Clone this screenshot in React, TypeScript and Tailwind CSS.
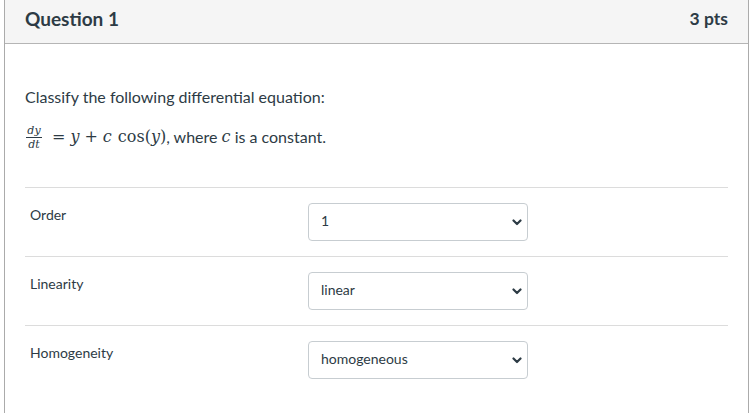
const rows = [
  { label: 'Order', value: '1' },
  { label: 'Linearity', value: 'linear' },
  { label: 'Homogeneity', value: 'homogeneous' },
];

function Chevron() {
  return (
    <svg width="10" height="7" viewBox="0 0 10 7" className="text-[#2d3b45]">
      <path d="M1.5 1.5 L5 5 L8.5 1.5" fill="none" stroke="currentColor" strokeWidth="2.2" strokeLinecap="round" strokeLinejoin="round" />
    </svg>
  );
}

function SelectBox({ value }: { value: string }) {
  return (
    <div className="w-[220px] h-[38px] border border-[#c7cdd1] rounded-[4px] bg-white flex items-center justify-between pl-[12px] pr-[5px]">
      <span className="text-[14px] leading-[18px] text-[#2d3b45] mb-[3px]">{value}</span>
      <Chevron />
    </div>
  );
}

function Equation() {
  return (
    <div className="mt-[13px] h-[30px] flex items-center text-[16px] text-[#2d3b45]">
      <span className="inline-flex flex-col items-center font-['DejaVu_Serif','Liberation_Serif',serif] italic text-[11px] leading-[11px] ml-[1px]">
        <span className="px-[1px]">dy</span>
        <span className="w-[16px] border-t border-[#2d3b45] mt-[1px]" />
        <span className="px-[1px] mt-[1px]">dt</span>
      </span>
      <span className="font-['DejaVu_Serif','Liberation_Serif',serif] text-[16px] ml-[10px]">
        =<span className="italic ml-[5px]">y</span>
        <span className="ml-[5px]">+</span>
        <span className="italic ml-[5px]">c</span>
        <span className="ml-[6px]">cos(</span>
        <span className="italic">y</span>)
      </span>
      <span className="whitespace-pre">, where </span>
      <span className="font-['DejaVu_Serif','Liberation_Serif',serif] italic text-[16px]">c</span>
      <span className="whitespace-pre"> is a constant.</span>
    </div>
  );
}

export default function App() {
  return (
    <div className="w-[751px] h-[413px] bg-white pl-[4px] pr-[2px] font-['Lato','Noto_Sans',sans-serif] text-[#2d3b45] overflow-hidden">
      <div className="h-full border-x border-[#ababab]">
        <div className="h-[44px] bg-[#f5f5f5] border-b border-[#b5b5b5] flex items-center justify-between px-[20px] pb-[5px]">
          <h2 className="text-[19px] font-bold">Question 1</h2>
          <span className="text-[17.5px] font-bold text-[#2d3b45]">3 pts</span>
        </div>
        <div className="px-[20px] pt-[41px]">
          <p className="text-[16px] leading-[24px]">Classify the following differential equation:</p>
          <Equation />
          <div className="mt-[35px]">
            {rows.map((row) => (
              <div key={row.label} className="h-[69px] border-t border-[#dcdcdc] flex items-start pt-[15px]">
                <div className="w-[283px] pl-[5px] pt-[2px] text-[14px] leading-[20px]">{row.label}</div>
                <SelectBox value={row.value} />
              </div>
            ))}
          </div>
        </div>
      </div>
    </div>
  );
}
